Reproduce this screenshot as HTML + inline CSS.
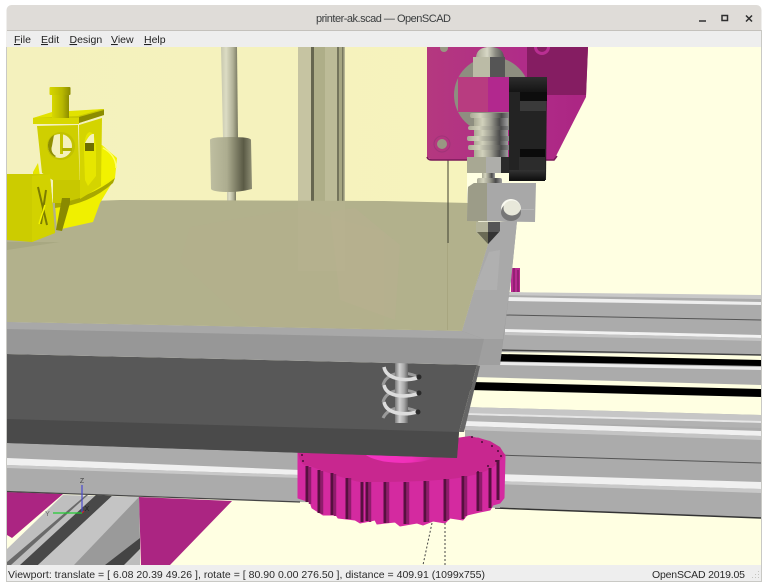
<!DOCTYPE html>
<html><head><meta charset="utf-8"><title>printer-ak.scad — OpenSCAD</title>
<style>html,body{margin:0;padding:0;background:#fff;width:768px;height:588px;overflow:hidden}svg{display:block}text{font-family:"Liberation Sans",sans-serif}</style></head>
<body>
<svg width="768" height="588" viewBox="0 0 768 588" xmlns="http://www.w3.org/2000/svg">
<defs>
<linearGradient id="bg" x1="0" x2="1" y1="0" y2="0"><stop offset="0" stop-color="#f4f1bd"/><stop offset="1" stop-color="#f6f3bd"/></linearGradient>
<linearGradient id="rod" x1="0" x2="1" y1="0" y2="0"><stop offset="0" stop-color="#c8c8ae"/><stop offset=".3" stop-color="#dcdcc4"/><stop offset=".7" stop-color="#b2b298"/><stop offset="1" stop-color="#77775f"/></linearGradient>
<linearGradient id="cyl" x1="0" x2="1" y1="0" y2="0"><stop offset="0" stop-color="#bfbfa1"/><stop offset=".4" stop-color="#adad90"/><stop offset=".8" stop-color="#5a5a45"/><stop offset="1" stop-color="#8f8f75"/></linearGradient>
<linearGradient id="shaft" x1="0" x2="1" y1="0" y2="0"><stop offset="0" stop-color="#7a7a7a"/><stop offset=".35" stop-color="#d0d0d0"/><stop offset=".7" stop-color="#a8a8a8"/><stop offset="1" stop-color="#666"/></linearGradient>
<linearGradient id="fin" x1="0" x2="1" y1="0" y2="0"><stop offset="0" stop-color="#a9a994"/><stop offset=".25" stop-color="#d2d2bc"/><stop offset=".5" stop-color="#9c9c90"/><stop offset=".75" stop-color="#4a4a4a"/><stop offset="1" stop-color="#a0a0a0"/></linearGradient>
<linearGradient id="dome" x1="0" x2="1" y1="0" y2="0"><stop offset="0" stop-color="#a8a894"/><stop offset=".4" stop-color="#d8d8c6"/><stop offset=".7" stop-color="#8a8a80"/><stop offset="1" stop-color="#555"/></linearGradient>
<linearGradient id="mount" x1="0" x2="1" y1="0" y2="0"><stop offset="0" stop-color="#b4387f"/><stop offset=".6" stop-color="#b02c88"/><stop offset="1" stop-color="#ab2583"/></linearGradient>
<linearGradient id="chim" x1="0" x2="1" y1="0" y2="0"><stop offset="0" stop-color="#d8d800"/><stop offset=".6" stop-color="#b8b800"/><stop offset="1" stop-color="#8c8c00"/></linearGradient>
<linearGradient id="hub" x1="0" x2="1" y1="0" y2="0"><stop offset="0" stop-color="#f634c6"/><stop offset=".6" stop-color="#f030b8"/><stop offset="1" stop-color="#b02680"/></linearGradient>
<linearGradient id="fanb" x1="0" x2="0" y1="0" y2="1"><stop offset="0" stop-color="#333"/><stop offset="1" stop-color="#0c0c0c"/></linearGradient>
<linearGradient id="fant" x1="0" x2="0" y1="0" y2="1"><stop offset="0" stop-color="#2e2e2e"/><stop offset="1" stop-color="#141414"/></linearGradient>
</defs>

<!-- window -->
<rect x="6.5" y="5" width="755" height="577" rx="5" fill="#dfdcd8"/>
<rect x="7" y="30" width="754" height="1" fill="#c4c1bc"/>
<rect x="7" y="31" width="754" height="16" fill="#eeeeee"/>
<rect x="6" y="47" width="1" height="535" fill="#c9c9c5"/>
<rect x="761" y="30" width="1" height="552" fill="#c9c9c5"/>

<text x="316" y="22" font-size="11" fill="#3a3d3e" textLength="135" lengthAdjust="spacing">printer-ak.scad — OpenSCAD</text>
<path d="M699 21h7" stroke="#3a3a3a" stroke-width="1.6"/>
<rect x="722" y="15.5" width="5.5" height="5" fill="none" stroke="#2e2e2e" stroke-width="1.5"/>
<path d="M746 15.5l6 6M752 15.5l-6 6" stroke="#2e2e2e" stroke-width="1.5"/>

<g font-size="10.5" fill="#222">
<text x="14" y="43"><tspan text-decoration="underline">F</tspan>ile</text>
<text x="41" y="43"><tspan text-decoration="underline">E</tspan>dit</text>
<text x="69.5" y="43"><tspan text-decoration="underline">D</tspan>esign</text>
<text x="111" y="43"><tspan text-decoration="underline">V</tspan>iew</text>
<text x="144" y="43"><tspan text-decoration="underline">H</tspan>elp</text>
</g>

<!-- viewport -->
<svg x="7" y="47" width="754" height="518" viewBox="7 47 754 518">
<rect x="7" y="47" width="754" height="518" fill="#ffffe2"/>
<polygon points="7,47 467,47 467,210 7,210" fill="url(#bg)"/>

<!-- rod, cylinder -->
<polygon points="221,47 237,47 238,138 223,138" fill="url(#rod)"/>
<rect x="227" y="190" width="9" height="12" fill="url(#rod)"/>
<path d="M210 140Q210 137 230 137Q251 137 251 140L252 189Q240 192 230 192Q213 192 211 189Z" fill="url(#cyl)"/>
<!-- extrusion -->
<rect x="298" y="47" width="47" height="155" fill="#b6b492"/>
<rect x="298" y="47" width="13" height="155" fill="#c6c4a2"/>
<rect x="311" y="47" width="3" height="155" fill="#66664f"/>
<rect x="314" y="47" width="11" height="155" fill="#aeae88"/>
<rect x="325" y="47" width="12" height="155" fill="#bcbb97"/>
<rect x="337" y="47" width="2" height="155" fill="#75755c"/>
<rect x="339" y="47" width="3" height="155" fill="#a6a682"/>
<rect x="342" y="47" width="1.5" height="155" fill="#77775e"/>

<!-- back gear piece -->
<rect x="511" y="268" width="9" height="24" fill="#b82a90"/>
<path d="M514 268v24M518 270v22" stroke="#6e1556" stroke-width="1"/>

<!-- rails right -->
<polygon points="490,292 761,296 761,355 490,352" fill="#ababab"/>
<polygon points="500,292 761,295 761,299 500,295" fill="#c8c8c8"/>
<polygon points="505,297 761,302 761,305 505,301" fill="#eeeeee"/>
<path d="M505 315L761 320" stroke="#555" stroke-width="1"/>
<polygon points="505,329 761,335 761,338 505,332" fill="#f2f2f2"/>
<polygon points="505,332 761,338 761,341 505,335" fill="#c4c4c4"/>
<path d="M500 350L761 355" stroke="#444" stroke-width="1.4"/>
<polygon points="500,354 761,360 761,368 500,362" fill="#000"/>
<polygon points="480,361 761,366 761,385 474,377" fill="#ababab"/>
<polygon points="500,362 761,367 761,370 500,365" fill="#ececec"/>
<polygon points="474,378 761,386 761,388 474,382" fill="#ffffe2"/>
<polygon points="472,382 761,389 761,397 470,390" fill="#000"/>

<polygon points="465,407 761,415 761,518 465,506" fill="#ababab"/>
<polygon points="465,407 761,415 761,423 465,414" fill="#c6c6c6"/>
<polygon points="465,413 761,421 761,423 465,415" fill="#e6e6e6"/>
<polygon points="465,415 761,423 761,428 465,421" fill="#b2b2b2"/>
<polygon points="465,421 761,431 761,436 465,426" fill="#f0f0f0"/>
<polygon points="465,426 761,436 761,440 465,430" fill="#c4c4c4"/>
<path d="M495 455L761 463" stroke="#555" stroke-width="1"/>
<polygon points="495,474 761,482 761,489 495,481" fill="#f0f0f0"/>
<polygon points="495,481 761,489 761,493 495,484" fill="#c8c8c8"/>
<path d="M495 508L761 518" stroke="#333" stroke-width="1.5"/>

<!-- bottom-left stuff -->
<polygon points="7,492 63,494 12,538 7,535" fill="#ab2582"/>
<polygon points="7,565 7,549 63,495 139,497 140,565" fill="#bfbfbf"/>
<polygon points="7,562 86,495 88,495 11,565 7,565" fill="#6a6a6a"/>
<polygon points="96,495 112,496 38,565 20,565" fill="#484848"/>
<polygon points="112,496 139,497 74,565 38,565" fill="#c4c4c4"/>
<polygon points="139,497 140,538 115,565 74,565" fill="#9a9a9a"/>
<polygon points="140,538 140,549 124,565 105,565" fill="#444"/>
<polygon points="140,550 140,565 128,565" fill="#bdbdbd"/>
<polygon points="139,497 232,501 170,565 141,565" fill="#ab2582"/>

<!-- main lower rail left -->
<polygon points="7,432 500,455 500,508 300,502 7,491" fill="#ababab"/>
<polygon points="7,458 300,470 300,475 7,465" fill="#f0f0f0"/>
<polygon points="7,465 300,475 300,478 7,468" fill="#c8c8c8"/>
<path d="M7 491.5L300 502" stroke="#444" stroke-width="1.2"/>

<!-- gear -->
<path d="M298 452L378 448L460 440L478 438L490 442L497 446L503 453L505 455L504 498L500 503L493 505L490 510L480 512L467 515L463 520L450 518L445 523L433 521L423 525L417 523L400 526L395 522L377 524L375 520L360 523L355 520L338 518L336 515L323 515L312 508L310 502L298 498Z" fill="#d42aa0" stroke="#d42aa0" stroke-linejoin="round"/>
<path d="M298 453C300 462 302 466 310 466C330 474 350 480 360 482C385 482 420 482 450 479C470 477 490 472 498 463L505 455L500 447L490 441L470 436L400 446L330 450Z" fill="#c8278f"/>
<path d="M307 466V502M319 470V513M332 473V515M347 478V519M362 482V522M367 482V521M385 482V523M405 482V524M425 481V522M445 479V521M463 476V519M478 472V511M490 468V508M498 460V500" stroke="#57103f" stroke-width="3" fill="none"/>
<path d="M310 467V504M322 471V514M335 474V516M350 478V519M370 482V522M388 482V523M408 482V524M428 481V522M448 479V520M466 476V516M481 472V511" stroke="#8f1c6c" stroke-width="2.500" fill="none"/>
<ellipse cx="403" cy="449" rx="41" ry="14" fill="url(#hub)"/>
<g fill="#4c0d38"><circle cx="472" cy="437" r="1"/><circle cx="482" cy="442" r="1"/><circle cx="492" cy="446" r="1"/><circle cx="498" cy="451" r="1"/><circle cx="501" cy="456" r="1"/><circle cx="496" cy="461" r="1"/><circle cx="488" cy="466" r="1"/><circle cx="478" cy="472" r="1"/><circle cx="302" cy="455" r="1"/><circle cx="303" cy="461" r="1"/></g>
<path d="M432 523L423 565M445 523V565" stroke="#444" stroke-width="1" stroke-dasharray="2 2" fill="none"/>

<!-- plate underside -->
<polygon points="7,354 477,365 459,432 457,458 7,443" fill="#585858"/>
<polygon points="7,419 459,432 457,458 7,443" fill="#4a4a4a"/>
<polygon points="477,365 459,432 464,432 480,366" fill="#666"/>

<!-- screw -->
<path d="M383 385C386 374 400 370 416 376M383 402C386 391 400 387 416 393M383 418C388 408 400 405 416 411" stroke="#9a9a9a" stroke-width="3" fill="none"/>
<rect x="395" y="362" width="13" height="61" fill="url(#shaft)"/>
<path d="M384 367C386 378 402 382 417 378M384 385C386 396 402 398 417 394M384 402C386 413 402 416 417 412" stroke="#dcdcdc" stroke-width="3.500" fill="none"/>
<g fill="#2a2a2a"><ellipse cx="419" cy="377" rx="2.500" ry="2.500"/><ellipse cx="419" cy="393" rx="2.500" ry="2.500"/><ellipse cx="418" cy="412" rx="2.500" ry="2.500"/></g>

<!-- plate sides -->
<polygon points="7,322 462,331 488,244 500,222 517,221 511,280 500,365 477,365 7,354" fill="#979797"/>
<polygon points="7,322 462,331 484,339 7,329" fill="#a8a8a8"/>
<polygon points="462,331 488,244 500,222 517,221 511,280 503,339 484,339" fill="#a9a9a9"/>
<polygon points="489,252 500,250 497,290 474,290" fill="#b0b0b0"/>
<polygon points="484,339 503,339 500,365 478,365" fill="#9f9f9f"/>

<!-- plate top -->
<polygon points="7,204 120,200 384,201 470,203 488,244 462,331 7,322" fill="#b2b18c"/>
<polygon points="190,227 300,208 384,232 384,330 250,326 180,262" fill="#b6b08f" opacity=".3"/>
<polygon points="330,212 355,208 400,245 395,320 340,300" fill="#bcb196" opacity=".3"/>
<rect x="298" y="201" width="47" height="70" fill="#bcb996" opacity=".2"/>
<polygon points="7,242 60,242 7,250" fill="#a8a882"/>

<!-- vertical line -->
<path d="M449.500 47V132M448 132V243" stroke="#3e3e30" stroke-width="1" fill="none"/>
<path d="M447.500 243V330" stroke="#a8a680" stroke-width="1" fill="none"/>

<!-- hot-end mount -->
<polygon points="427,47 588,47 586,97 555,158 553,160 432,160 427,157" fill="url(#mount)"/>
<polygon points="527,47 588,47 586,95 527,95" fill="#851d62"/>
<path d="M427 157Q428 160 432 160H554L557 156" stroke="#7a1a5a" stroke-width="1.600" fill="none"/>
<circle cx="442" cy="144" r="5" fill="#989882"/>
<circle cx="442" cy="144" r="8" fill="none" stroke="#a03478" stroke-width="1"/>
<circle cx="444" cy="48" r="4" fill="#989882"/>
<circle cx="542" cy="47" r="8" fill="#b92f92"/><circle cx="542" cy="47" r="5" fill="#851d62"/>

<!-- heatsink -->
<circle cx="492" cy="95" r="38" fill="#8e8e80"/>
<path d="M476 57Q477 47 490 47Q503 47 504 57Z" fill="url(#dome)"/>
<rect x="473" y="57" width="17" height="20" fill="#bbbba6"/>
<rect x="490" y="57" width="15" height="20" fill="#555"/>
<rect x="458" y="77" width="30" height="35" fill="#b83c80"/>
<rect x="488" y="77" width="22" height="35" fill="#b2288e"/>
<g>
<rect x="470" y="113" width="42" height="5" rx="2" fill="url(#fin)"/>
<rect x="474" y="118" width="34" height="8" fill="url(#fin)"/>
<rect x="468" y="126" width="44" height="4" rx="2" fill="url(#fin)"/>
<rect x="474" y="130" width="34" height="6" fill="url(#fin)"/>
<rect x="467" y="136" width="44" height="5" rx="2" fill="url(#fin)"/>
<rect x="474" y="141" width="34" height="4" fill="url(#fin)"/>
<rect x="468" y="145" width="44" height="5" rx="2" fill="url(#fin)"/>
<rect x="474" y="150" width="34" height="7" fill="url(#fin)"/>
</g>
<rect x="467" y="157" width="19" height="16" fill="#a8a893"/>
<rect x="486" y="157" width="15" height="16" fill="#aeaeaa"/>
<rect x="501" y="157" width="9" height="16" fill="#2a2a2a"/>
<rect x="482" y="173" width="13" height="6" fill="url(#fin)"/>
<rect x="477" y="178" width="25" height="8" rx="2" fill="url(#fin)"/>

<!-- fan -->
<polygon points="509,77 547,77 546,180 509,180" fill="#232323"/>
<rect x="509" y="77" width="38" height="15" fill="url(#fant)"/>
<rect x="520" y="92" width="27" height="9" fill="#0d0d0d"/>
<rect x="520" y="101" width="26" height="10" fill="#3a3a3a"/>
<rect x="520" y="149" width="25" height="8" fill="#0b0b0b"/>
<rect x="519" y="157" width="26" height="14" fill="#2c2c2c"/>
<rect x="509" y="170" width="36" height="11" fill="url(#fanb)"/>

<!-- heater block -->
<polygon points="468,187 474,183 536,183 535,222 467,221" fill="#a8a8a8"/>
<polygon points="468,187 474,183 487,183 487,221 467,221" fill="#9c9c88"/>
<circle cx="511" cy="209" r="10" fill="#fbfbf2"/>
<ellipse cx="511" cy="212" rx="10" ry="9" fill="#777"/>
<ellipse cx="512" cy="208" rx="8.500" ry="7.500" fill="#e8e8da"/>
<path d="M521 209.500h13" stroke="#bbb" stroke-width=".7"/>

<!-- nozzle -->
<polygon points="476,222 488,222 488,244 476,232" fill="#b3b39a"/>
<polygon points="488,222 500,222 500,231 488,244" fill="#555"/>
<polygon points="477,232 488,232 488,244" fill="#6a6a55"/>
<polygon points="488,232 499,232 488,244" fill="#333"/>

<!-- boat -->
<polygon points="102,145 117,158 115,178 100,188 80,150" fill="#f2f200"/>
<polygon points="33,172 38,163 42,190 33,190" fill="#e6e600"/>
<polygon points="55,203 115,178 100,203 93,222 57,230" fill="#f0f000"/>
<path d="M55 203Q90 198 115 178L113 183Q90 204 55 208Z" fill="#a8a800"/>
<path d="M103 148Q116 155 116 168" stroke="#ffff66" stroke-width="1.500" fill="none"/>
<polygon points="37,126 78,125 80,198 42,173" fill="#cfcf00"/>
<polygon points="79,125 102,118 101,186 80,199" fill="#d4d400"/>
<polygon points="53,180 80,180 80,198 62,203 53,203" fill="#c8c800"/>
<polygon points="62,198 70,198 70,203 62,231 56,230" fill="#8a8a00"/>
<circle cx="61" cy="146" r="14" fill="#c2c200"/>
<circle cx="60" cy="146" r="12" fill="#f4f1bd"/>
<path d="M48 146a12 12 0 0 1 6 -11l-2 11a8 8 0 0 0 4 10l-1 1a12 12 0 0 1 -7 -11z" fill="#8f8f00"/>
<rect x="60" y="134" width="3" height="20" fill="#c6c600"/>
<rect x="62" y="148" width="10" height="3" fill="#b0b000"/>
<path d="M84 152Q84 133 90 132Q96 134 96 152V176L88 186L85 180Z" fill="#e6e600"/>
<path d="M85 143Q90 133 94 134V143Z" fill="#f4f1bd"/>
<rect x="85" y="143" width="9" height="8" fill="#6e6e00"/>
<polygon points="33,118 52,113 104,109 104,115 79,123 33,123" fill="#c8c800"/>
<polygon points="33,118 52,112 103,109 78,116 33,118" fill="#e2e200"/>
<rect x="33" y="118" width="46" height="6" fill="#d8d800"/>
<polygon points="79,117 104,110 104,115 79,123" fill="#8c8c00"/>
<rect x="52" y="94" width="17" height="24" fill="url(#chim)"/>
<rect x="49.500" y="87" width="21" height="8" rx="1" fill="url(#chim)"/>
<polygon points="7,174 50,174 55,233 32,242 7,240" fill="#cccc00"/>
<polygon points="32,176 50,174 55,233 32,242" fill="#d2d200"/>
<path d="M38 187L47 225M46 190L41 224" stroke="#7c7c00" stroke-width="2" fill="none"/>
<path d="M39 224L45 205" stroke="#f4f400" stroke-width="1.500" fill="none"/>

<!-- axes -->
<path d="M82 513V485" stroke="#4a4ad0" stroke-width="1.200"/>
<path d="M82 513H53" stroke="#22cc33" stroke-width="1.200"/>
<path d="M82 513l2 -2" stroke="#cc2222" stroke-width="1.200"/>
<text x="82" y="483" font-size="7" text-anchor="middle" fill="#444">Z</text>
<text x="47.500" y="516" font-size="7" text-anchor="middle" fill="#666">Y</text>
<text x="87" y="511" font-size="7" text-anchor="middle" fill="#222">X</text>
</svg>

<!-- status bar -->
<rect x="7" y="565" width="754" height="16" fill="#eeeeee"/>
<rect x="6" y="581" width="756" height="1" fill="#c9c9c5"/>
<text x="8" y="578" font-size="10.500" fill="#2a2a2a" textLength="477" lengthAdjust="spacing">Viewport: translate = [ 6.08 20.39 49.26 ], rotate = [ 80.90 0.00 276.50 ], distance = 409.91 (1099x755)</text>
<text x="652" y="578" font-size="10.500" fill="#2a2a2a" textLength="93" lengthAdjust="spacing">OpenSCAD 2019.05</text>
<g fill="#c4c4c0"><rect x="758" y="577" width="1" height="1"/><rect x="755" y="577" width="1" height="1"/><rect x="758" y="574" width="1" height="1"/><rect x="752" y="577" width="1" height="1"/><rect x="755" y="574" width="1" height="1"/><rect x="758" y="571" width="1" height="1"/></g>
</svg>
</body></html>
